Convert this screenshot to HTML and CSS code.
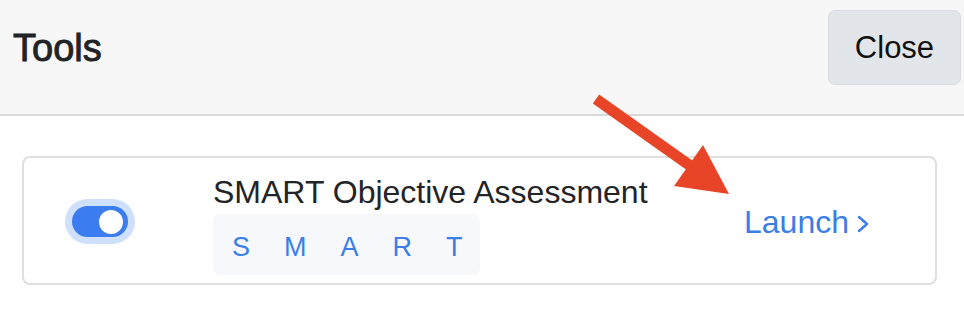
FILE: index.html
```html
<!DOCTYPE html>
<html lang="en">
<head>
<meta charset="utf-8">
<title>Tools</title>
<link rel="stylesheet" href="styles.css">
</head>
<body>
<div class="page">
  <header class="header">
    <h1 class="title">Tools</h1>
    <button class="close-btn" type="button">Close</button>
  </header>
  <main class="content">
    <div class="card">
      <div class="toggle"><span class="knob"></span></div>
      <div class="info">
        <div class="tool-name">SMART Objective Assessment</div>
        <div class="letters">
          <span>S</span><span>M</span><span>A</span><span>R</span><span>T</span>
        </div>
      </div>
      <a class="launch" href="#">Launch
        <svg class="chev" width="12" height="18" viewBox="0 0 12 18"><polyline points="2,2 10,9 2,16" fill="none" stroke="currentColor" stroke-width="2.4" stroke-linecap="round" stroke-linejoin="round"/></svg>
      </a>
    </div>
  </main>
  <svg class="arrow" width="964" height="320" viewBox="0 0 964 320">
    <line x1="596" y1="99" x2="692" y2="167" stroke="#e84427" stroke-width="11"/>
    <polygon points="703,145 674,186 729,194" fill="#e84427"/>
  </svg>
</div>
</body>
</html>
```

FILE: styles.css
```css
html, body {
  margin: 0;
  padding: 0;
  background: #ffffff;
}
body {
  font-family: "Liberation Sans", Arial, sans-serif;
  color: #212529;
  width: 964px;
  height: 320px;
  overflow: hidden;
}
.page {
  position: relative;
  width: 964px;
  height: 320px;
}
.header {
  display: flex;
  align-items: center;
  justify-content: space-between;
  box-sizing: border-box;
  height: 116px;
  padding: 10px 3px 29px 13px;
  background: #f7f7f7;
  border-bottom: 2px solid #d9d9d9;
}
.title {
  margin: 0;
  font-size: 38px;
  font-weight: 400;
  line-height: 44px;
  color: #212326;
  -webkit-text-stroke: 0.9px #212326;
}
.close-btn {
  width: 133px;
  height: 75px;
  background: #e2e5e9;
  border: 1px solid #d9dde2;
  border-radius: 7px;
  font-family: "Liberation Sans", Arial, sans-serif;
  font-size: 31px;
  color: #111111;
  padding: 0;
}
.content {
  padding: 40px 27px 0 22px;
}
.card {
  display: flex;
  align-items: center;
  box-sizing: border-box;
  height: 129px;
  border: 2px solid #dfdfdf;
  border-radius: 8px;
  padding: 0 66px 0 48px;
}
.toggle {
  position: relative;
  width: 56px;
  height: 31px;
  border-radius: 16px;
  background: #3b7cf1;
  box-shadow: 0 0 0 7px #cfe0fc;
  flex: none;
  margin-top: 2px;
}
.knob {
  position: absolute;
  top: 4px;
  left: 27px;
  width: 24px;
  height: 24px;
  border-radius: 50%;
  background: #ffffff;
}
.info {
  margin-left: 85px;
  display: flex;
  flex-direction: column;
  align-items: flex-start;
  padding-top: 6px;
}
.tool-name {
  font-size: 32px;
  line-height: 40px;
  color: #222428;
}
.letters {
  display: flex;
  gap: 34px;
  box-sizing: border-box;
  height: 61px;
  margin-top: 2px;
  padding: 6px 17px 0 19px;
  background: #f6f8fb;
  border-radius: 7px;
  font-size: 27px;
  line-height: 55px;
  color: #3b7ee8;
}
.launch {
  margin-left: auto;
  display: flex;
  align-items: center;
  gap: 8px;
  font-size: 32px;
  color: #3b7ee8;
  text-decoration: none;
  margin-top: 4px;
}
.chev {
  display: block;
  margin-top: 2px;
}
.arrow {
  position: absolute;
  left: 0;
  top: 0;
  pointer-events: none;
}
```
